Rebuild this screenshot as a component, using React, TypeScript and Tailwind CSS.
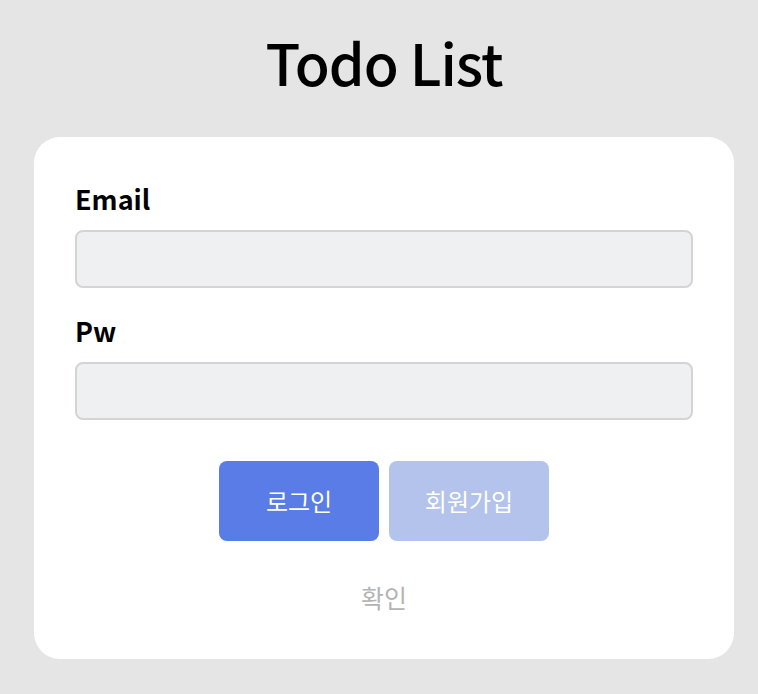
export default function App() {
  return (
    <div
      className="min-h-screen bg-[#e5e5e5] flex flex-col items-center pt-[21px] pl-[10px]"
      style={{ fontFamily: '"Noto Sans CJK KR", "Noto Sans", sans-serif' }}
    >
      <h1 className="text-[57px] leading-[80px] font-medium text-black tracking-[-1px]">Todo List</h1>
      <div className="mt-[36px] w-[700px] bg-white rounded-[26px] px-[41px] pt-[42px] pb-[42px]">
        <label className="block text-[27px] font-bold leading-[40px] text-black">Email</label>
        <input className="mt-[11px] block w-full h-[58px] rounded-[8px] border-2 border-[#d4d4d4] bg-[#eff0f2]" />
        <label className="mt-[23px] block text-[27px] font-bold leading-[40px] text-black">Pw</label>
        <input className="mt-[11px] block w-full h-[58px] rounded-[8px] border-2 border-[#d4d4d4] bg-[#eff0f2]" />
        <div className="mt-[41px] flex justify-center gap-[10px]">
          <button className="w-[160px] h-[80px] rounded-[8px] bg-[#5a7ce6] text-white text-[24px]">로그인</button>
          <button className="w-[160px] h-[80px] rounded-[8px] bg-[#b3c3ec] text-white text-[24px]">회원가입</button>
        </div>
        <p className="mt-[36px] text-center text-[25px] leading-[40px] text-[#b4b4b4]">확인</p>
      </div>
    </div>
  );
}
